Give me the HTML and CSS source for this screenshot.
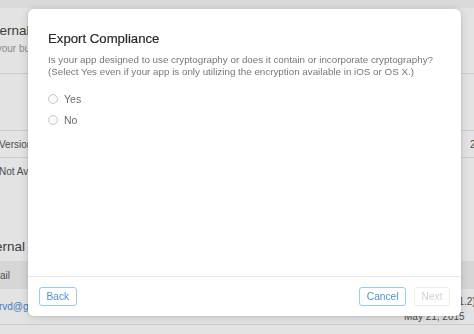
FILE: index.html
```html
<!DOCTYPE html>
<html lang="en">
<head>
<meta charset="utf-8">
<title>Export Compliance</title>
<link rel="stylesheet" href="styles.css">
</head>
<body>
<div class="page">
  <section class="sec">
    <h2 class="sec-title">External Testing</h2>
    <p class="sec-sub">Let your builds be tested by up to 1000 external testers.</p>
  </section>
  <div class="rows">
    <div class="row"><span class="row-label">Version</span><span class="row-val">2</span></div>
    <div class="row row-plain"><span class="row-label">Not Available</span></div>
  </div>
  <h2 class="sec-title sec-title-2">Internal Testers</h2>
  <div class="thead"><span class="col-email">Email</span><span class="col-status">Status</span></div>
  <div class="trow">
    <span class="col-email link">marvd@gmail.com</span>
    <span class="col-status"><span class="line">Testing 1.0 (1.2)</span><span class="line line-date">May 21, 2015</span></span>
  </div>
</div>
<div class="overlay"></div>
<div class="modal">
  <div class="modal-body">
    <h1 class="title">Export Compliance</h1>
    <p class="desc">Is your app designed to use cryptography or does it contain or incorporate cryptography?<br>(Select Yes even if your app is only utilizing the encryption available in iOS or OS X.)</p>
    <div class="options">
      <label class="option"><span class="radio"></span><span class="opt-label">Yes</span></label>
      <label class="option"><span class="radio"></span><span class="opt-label">No</span></label>
    </div>
  </div>
  <div class="modal-footer">
    <button class="btn">Back</button>
    <div class="btn-group">
      <button class="btn">Cancel</button>
      <button class="btn btn-disabled">Next</button>
    </div>
  </div>
</div>
</body>
</html>
```
FILE: styles.css
```css
* { box-sizing: border-box; }
html, body { margin: 0; padding: 0; }
body {
  width: 474px;
  height: 334px;
  overflow: hidden;
  position: relative;
  background: #f3f3f3;
  font-family: "Liberation Sans", Arial, Helvetica, sans-serif;
}
.page {
  margin-left: -20px;
  margin-top: 8px;
  width: 560px;
  height: 340px;
  background: #fdfdfd;
  color: #555;
}
.sec {
  padding: 13.5px 0 18.5px 0;
  border-bottom: 1px solid #e2e2e2;
}
.sec-title {
  margin: 0;
  font-size: 13.5px;
  line-height: 17px;
  font-weight: normal;
  color: #444;
}
.sec-sub {
  margin: 3px 0 0;
  font-size: 10px;
  line-height: 13px;
  color: #999;
}
.rows { margin-top: 56px; }
.row {
  display: flex;
  align-items: center;
  height: 27px;
  padding-left: 19px;
  font-size: 10px;
  color: #555;
  border-top: 1px solid #e2e2e2;
}
.row-plain { height: 28px; }
.row-label { width: 471px; flex: none; }
.sec-title-2 { margin-top: 53px; }
.thead {
  display: flex;
  align-items: center;
  height: 28px;
  margin-top: 6px;
  background: #efefef;
  font-size: 10px;
  color: #555;
}
.col-email { width: 424px; flex: none; padding-left: 5px; }
.trow {
  display: flex;
  align-items: flex-start;
  height: 36px;
  padding-top: 6px;
  font-size: 10px;
  color: #555;
  border-bottom: 1px solid #e2e2e2;
}
.trow .col-email { align-self: center; margin-top: -6px; }
.link { color: #3f8fd6; }
.col-status { display: flex; flex-direction: column; }
.line { line-height: 13px; }
.line-date { margin-top: 2px; }
.overlay {
  position: fixed;
  inset: 0;
  background: rgba(0, 0, 0, 0.1);
}
.modal {
  position: absolute;
  left: 28px;
  top: 9px;
  width: 433px;
  height: 307px;
  background: #fff;
  border-radius: 6px;
  box-shadow: 0 0 0 1px rgba(0, 0, 0, 0.04), 0 1px 8px rgba(0, 0, 0, 0.16);
  display: flex;
  flex-direction: column;
}
.modal-body {
  flex: 1;
  padding: 22px 20px 0;
}
.title {
  margin: 0;
  font-size: 13.2px;
  line-height: 16px;
  font-weight: normal;
  color: #2b2b2b;
  -webkit-text-stroke: 0.2px #2b2b2b;
}
.desc {
  margin: 7px 0 0;
  font-size: 9.8px;
  line-height: 12px;
  color: #777;
}
.options {
  margin-top: 13.5px;
  display: flex;
  flex-direction: column;
  gap: 7px;
}
.option {
  display: flex;
  align-items: center;
  height: 14px;
}
.radio {
  width: 10px;
  height: 10px;
  border-radius: 50%;
  border: 1px solid #c9c9c9;
  background: #fafafa;
}
.opt-label {
  margin-left: 6px;
  font-size: 10.5px;
  color: #6a6a6a;
}
.modal-footer {
  height: 40px;
  border-top: 1px solid #e8e8e8;
  padding: 10px 11px 0;
  display: flex;
  justify-content: space-between;
  align-items: flex-start;
}
.btn-group { display: flex; gap: 8px; }
.btn {
  height: 19px;
  padding: 0 6.5px;
  border: 1px solid #97cbf1;
  border-radius: 3px;
  background: #fff;
  color: #4a92d8;
  font-family: inherit;
  font-size: 10.2px;
  line-height: 17px;
}
.btn-disabled {
  border-color: #ececec;
  color: #d2d2d2;
}
```
